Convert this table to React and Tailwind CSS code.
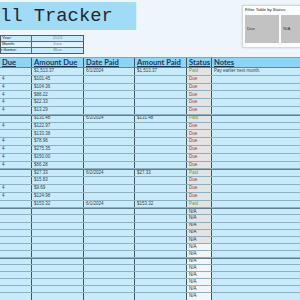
import React from "react";

const data = [
  { a: "", b: "$1,513.37", c: "6/1/2024", d: "$1,513.37", s: "Paid", n: "Pay earlier next month." },
  { a: "4", b: "$101.45", s: "Due" },
  { a: "4", b: "$104.36", s: "Due" },
  { a: "4", b: "$88.22", s: "Due" },
  { a: "4", b: "$22.33", s: "Due" },
  { a: "4", b: "$13.29", s: "Due" },
  { a: "", b: "$131.48", c: "6/2/2024", d: "$131.48", s: "Paid", sep: true },
  { a: "4", b: "$122.97", s: "Due" },
  { a: "", b: "$133.38", s: "Due" },
  { a: "4", b: "$78.96", s: "Due" },
  { a: "4", b: "$275.35", s: "Due" },
  { a: "4", b: "$150.00", s: "Due" },
  { a: "4", b: "$66.28", s: "Due" },
  { a: "", b: "$27.33", c: "6/2/2024", d: "$27.33", s: "Paid", sep: true },
  { a: "", b: "$15.83", s: "Due" },
  { a: "4", b: "$9.69", s: "Due" },
  { a: "4", b: "$124.98", s: "Due" },
  { a: "", b: "$153.32", c: "6/1/2024", d: "$153.32", s: "Paid" },
];

const naRows = Array.from({ length: 13 }, (_, i) => ({
  a: "",
  b: "",
  s: "N/A",
  sep: i === 0 || i === 7,
  white: i >= 5,
  na: true,
}));

const cols = "grid grid-cols-[32px_52px_51px_52px_25px_88px]";

function Cell({ children, className = "" }) {
  return (
    <div className={`flex items-center px-[2px] border-r border-[#3e5866] overflow-hidden whitespace-nowrap ${className}`}>
      {children}
    </div>
  );
}

function Row({ r }) {
  const statusColor =
    r.s === "Paid" ? "text-[#5e9f3f]" : r.s === "Due" ? "text-[#9a3a36]" : "text-[#2c2c2c]";
  const statusBg = r.white ? "bg-[#f3f6f8]" : "bg-[#e3e3e3]";
  return (
    <div
      className={`${cols} ${r.na ? "h-[7.1px]" : "h-[7.8px]"} bg-[#c8ebfb] border-b border-[#8fb0bf] ${
        r.sep ? "border-t border-t-[#5f7f8d]" : ""
      } text-[4.5px] leading-none text-[#33434d]`}
    >
      <Cell className="px-0">{r.a}</Cell>
      <Cell>{r.b}</Cell>
      <Cell>{r.c || ""}</Cell>
      <Cell>{r.d || ""}</Cell>
      <Cell className={`${statusBg} ${statusColor}`}>{r.s}</Cell>
      <Cell className="border-r-0">{r.n || ""}</Cell>
    </div>
  );
}

export default function App() {
  return (
    <div className="w-[300px] h-[300px] overflow-hidden bg-[#eef6fc] font-['Liberation_Sans',sans-serif]">
      <div className="flex h-[58px] border-b border-[#8aa4ae]">
        <div className="flex flex-col w-[137px]">
          <div className="mt-[2px] h-[28px] w-[137px] bg-[#a2dbf6] border-r border-[#dbeef7] flex items-center font-['Liberation_Mono',monospace] text-[18.8px] leading-none text-[#1d2830]">
            ll Tracker
          </div>
          <div className="mt-[5px] w-[84px] border border-[#4e5b63] text-[4.3px] leading-none">
            <div className="grid grid-cols-[31px_1fr] h-[6px] bg-[#c8ebfb] border-b border-[#5d6a72]">
              <div className="flex items-center pl-[1px] border-r border-[#5d6a72] text-[#222]">Year:</div>
              <div className="flex items-center justify-center text-[#7a8790]">2024</div>
            </div>
            <div className="grid grid-cols-[31px_1fr] h-[6px] bg-[#e1f4fd] border-b border-[#5d6a72]">
              <div className="flex items-center pl-[1px] border-r border-[#5d6a72] text-[#222]">Month:</div>
              <div className="flex items-center justify-center text-[#7a8790]">June</div>
            </div>
            <div className="grid grid-cols-[31px_1fr] h-[5px] bg-[#c8ebfb]">
              <div className="flex items-center border-r border-[#5d6a72] text-[#222]">r theme:</div>
              <div className="flex items-center justify-center text-[#7a8790]">Blue</div>
            </div>
          </div>
        </div>
        <div className="ml-auto -mr-[12px] mt-[5px] h-[43px] w-[70px] bg-[#fbfcfd] border border-[#d3d8db] shadow-[0_0_2px_rgba(0,0,0,0.12)] flex flex-col">
          <div className="pl-[2px] pt-[2px] h-[9px] text-[4.3px] leading-none text-[#222]">Filter Table by Status:</div>
          <div className="flex gap-[2px] pl-[2px]">
            <div className="w-[46px] h-[28px] bg-[#c2c2c2] flex items-center pl-[2px] text-[4.3px] text-[#333]">Due</div>
            <div className="w-[40px] h-[28px] bg-[#c2c2c2] flex items-center pl-[2px] text-[4.3px] text-[#333]">N/A</div>
          </div>
        </div>
      </div>
      <div className={`${cols} h-[10px] bg-[#8ed4f5] border-b border-[#5f8696] text-[7.6px] font-bold underline leading-none text-[#1b3856] font-['Lato',sans-serif]`}>
        <Cell className="px-0">Due</Cell>
        <Cell>Amount Due</Cell>
        <Cell>Date Paid</Cell>
        <Cell>Amount Paid</Cell>
        <Cell className="px-[1px]">Status</Cell>
        <Cell className="border-r-0">Notes</Cell>
      </div>
      {data.map((r, i) => (
        <Row key={i} r={r} />
      ))}
      {naRows.map((r, i) => (
        <Row key={"n" + i} r={r} />
      ))}
    </div>
  );
}
